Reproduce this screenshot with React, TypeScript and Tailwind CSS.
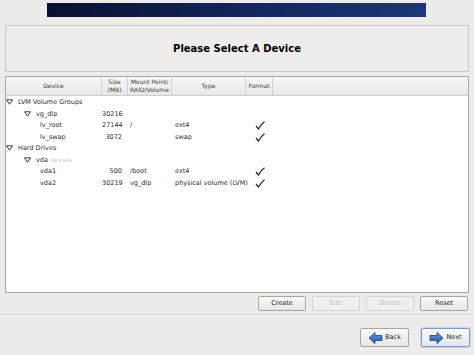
import React from "react";

type Row = {
  level: number;
  expander?: boolean;
  name: string;
  hint?: string;
  size?: string;
  mount?: string;
  type?: string;
  format?: boolean;
};

const rows: Row[] = [
  { level: 0, expander: true, name: "LVM Volume Groups" },
  { level: 1, expander: true, name: "vg_dlp", size: "30216" },
  { level: 2, name: "lv_root", size: "27144", mount: "/", type: "ext4", format: true },
  { level: 2, name: "lv_swap", size: "3072", type: "swap", format: true },
  { level: 0, expander: true, name: "Hard Drives" },
  { level: 1, expander: true, name: "vda", hint: "/dev/vda" },
  { level: 2, name: "vda1", size: "500", mount: "/boot", type: "ext4", format: true },
  { level: 2, name: "vda2", size: "30219", mount: "vg_dlp", type: "physical volume (LVM)", format: true },
];

const font = { fontFamily: '"DejaVu Sans", Verdana, sans-serif' };

function Expander() {
  return (
    <svg width="7" height="6" viewBox="0 0 7 6" className="shrink-0">
      <path d="M0.5 0.8 L6.5 0.8 L3.5 5.2 Z" fill="none" stroke="#3c3c3c" strokeWidth="1" />
    </svg>
  );
}

function Check() {
  return (
    <svg width="10" height="9" viewBox="0 0 10 9">
      <path d="M1 5 L3.5 8 C5 5 7 2.5 9.5 0.8" fill="none" stroke="#2a2a2a" strokeWidth="1.3" />
    </svg>
  );
}

function Arrow({ dir }: { dir: "left" | "right" }) {
  const d =
    dir === "left"
      ? "M1 6 L7 0.5 L7 3.5 L14 3.5 L14 8.5 L7 8.5 L7 11.5 Z"
      : "M14 6 L8 0.5 L8 3.5 L1 3.5 L1 8.5 L8 8.5 L8 11.5 Z";
  return (
    <svg width="15" height="12" viewBox="0 0 15 12">
      <defs>
        <linearGradient id={`g-${dir}`} x1="0" y1="0" x2="0" y2="1">
          <stop offset="0" stopColor="#6f9fe0" />
          <stop offset="1" stopColor="#1f4f9f" />
        </linearGradient>
      </defs>
      <path d={d} fill={`url(#g-${dir})`} stroke="#1d4282" strokeWidth="0.8" />
    </svg>
  );
}

function Button({
  label,
  disabled,
  className,
}: {
  label: string;
  disabled?: boolean;
  className?: string;
}) {
  return (
    <div
      className={`flex h-[15px] w-[48px] items-center justify-center rounded-[2px] border text-[6.5px] ${
        disabled
          ? "border-[#d4d3d1] bg-[#f1f0ef] text-[#c4c3c1]"
          : "border-[#a6a5a3] bg-gradient-to-b from-[#fbfbfa] to-[#e7e6e4] text-[#222]"
      } ${className ?? ""}`}
    >
      {label}
    </div>
  );
}

export default function App() {
  return (
    <div
      className="flex h-[355px] w-[474px] flex-col overflow-hidden bg-[#edeceb] text-[#2e2e2e] antialiased"
      style={font}
    >
      <div className="pl-[47px] pt-[3px]">
        <div className="h-[14px] w-[379px] bg-gradient-to-r from-[#0a1130] via-[#13245a] to-[#1c3878]" />
      </div>

      <div className="mx-[5px] mt-[8px] flex h-[47px] items-center justify-center border border-[#c9c8c6] bg-[#eeedec]">
        <span className="text-[10px] font-bold text-black">Please Select A Device</span>
      </div>

      <div className="mx-[5px] mt-[4px] flex h-[217px] flex-col border border-[#a9a8a6] bg-white">
        <div className="flex h-[19px] border-b border-[#cfcecc] bg-gradient-to-b from-[#f7f7f6] to-[#e9e8e6] text-[6px] leading-[8px] text-[#3a3a3a]">
          <div className="flex w-[96px] items-center justify-center border-r border-[#d3d2d0]">Device</div>
          <div className="flex w-[26px] flex-col items-center justify-center border-r border-[#d3d2d0]">
            <span>Size</span>
            <span>(MB)</span>
          </div>
          <div className="flex w-[44px] flex-col items-center justify-center border-r border-[#d3d2d0]">
            <span>Mount Point/</span>
            <span>RAID/Volume</span>
          </div>
          <div className="flex w-[74px] items-center justify-center border-r border-[#d3d2d0]">Type</div>
          <div className="flex w-[27px] items-center justify-center border-r border-[#d3d2d0]">Format</div>
          <div className="flex-1" />
        </div>

        <div className="flex flex-col text-[6.5px] leading-[8px]">
          {rows.map((r, i) => (
            <div
              key={r.name}
              className={`flex items-center ${i % 2 === 0 ? "h-[12px]" : "h-[11px]"}`}
            >
              <div
                className="flex w-[96px] items-center gap-[5px]"
                style={{ paddingLeft: r.level === 0 ? 0 : r.level === 1 ? 18 : 34 }}
              >
                {r.expander ? <Expander /> : null}
                <span className="whitespace-nowrap">
                  {r.name}
                  {r.hint ? <span className="ml-[2px] text-[5px] text-[#bdbdbd]">{r.hint}</span> : null}
                </span>
              </div>
              <div className="w-[23px] pr-[3px] text-right">{r.size ?? ""}</div>
              <div className="w-[47px] pl-[5px] whitespace-nowrap">{r.mount ?? ""}</div>
              <div className="w-[78px] pl-[3px] whitespace-nowrap">{r.type ?? ""}</div>
              <div className="flex w-[20px] items-center justify-center pt-[1px]">
                {r.format ? <Check /> : null}
              </div>
            </div>
          ))}
        </div>
      </div>

      <div className="mt-[3px] flex justify-end gap-[6px] pr-[6px]">
        <Button label="Create" />
        <Button label="Edit" disabled />
        <Button label="Delete" disabled />
        <Button label="Reset" />
      </div>

      <div className="mt-[3px] h-[2px] border-t border-[#d6d5d3] bg-[#f6f6f5]" />

      <div className="mt-[12px] flex justify-end gap-[12px] pr-[4px]">
        <div className="flex h-[19px] w-[49px] items-center justify-center gap-[2px] rounded-[2px] border border-[#a6a5a3] bg-gradient-to-b from-[#fbfbfa] to-[#e7e6e4] text-[6.5px] text-[#222]">
          <Arrow dir="left" />
          <span>Back</span>
        </div>
        <div className="flex h-[19px] w-[49px] items-center justify-center gap-[2px] rounded-[2px] border border-[#7d9cc8] bg-gradient-to-b from-[#fbfbfa] to-[#e4e6ea] text-[6.5px] text-[#222] shadow-[0_0_0_1px_#c5d4ea]">
          <Arrow dir="right" />
          <span>Next</span>
        </div>
      </div>
    </div>
  );
}
